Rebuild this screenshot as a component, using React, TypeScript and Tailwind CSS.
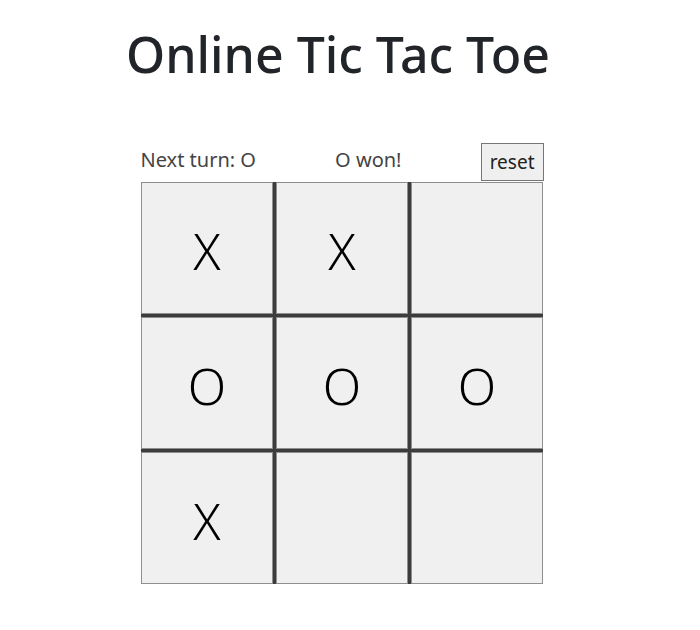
import React from "react";

const cells = ["X", "X", "", "O", "O", "O", "X", "", ""];

export default function App() {
  return (
    <div className="w-[684px] min-h-[630px] bg-white flex flex-col items-center font-['Noto_Sans','Open_Sans',sans-serif]">
      <h1 className="mt-[22px] mr-[8px] text-[50px] leading-[64px] font-medium text-[#212529]">Online Tic Tac Toe</h1>

      <div className="mt-[57px] w-[403px] flex items-end justify-between">
        <span className="mb-[8px] text-[20px] leading-[26px] text-[#444]">Next turn: O</span>
        <span className="mb-[8px] text-[20px] leading-[26px] text-[#444]">O won!</span>
        <button className="h-[38px] px-[8px] bg-[#efefef] border border-[#767676] text-[19px] text-[#222]">
          reset
        </button>
      </div>

      <div className="grid grid-cols-[132px_132px_132px] grid-rows-[132px_132px_132px] gap-[3px] bg-[#3c3c3c] mt-[1px]">
        {cells.map((c, i) => (
          <button
            key={i}
            className="bg-[#f0f0f0] border border-[#8e8e8e] flex items-center justify-center pt-[6px] text-[50px] font-light text-black"
          >
            {c}
          </button>
        ))}
      </div>
    </div>
  );
}
